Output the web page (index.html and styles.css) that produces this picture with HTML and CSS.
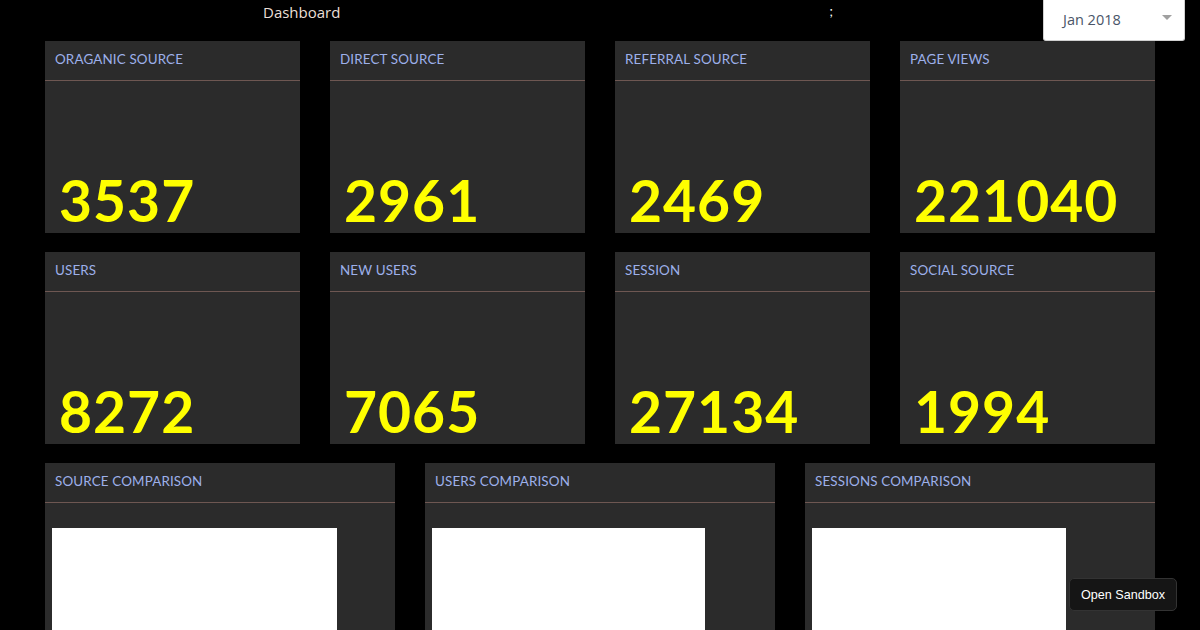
FILE: index.html
```html
<!DOCTYPE html>
<html>
<head>
<meta charset="utf-8">
<link rel="stylesheet" href="styles.css">
</head>
<body>
<div class="topbar">
  <div class="brand">Dashboard</div>
  <div class="semi">;</div>
  <div class="select">
    <span>Jan 2018</span>
    <span class="caret"></span>
  </div>
</div>
<div class="grid4">
  <div class="card"><div class="card-head">ORAGANIC SOURCE</div><div class="card-body"><div class="num">3537</div></div></div>
  <div class="card"><div class="card-head">DIRECT SOURCE</div><div class="card-body"><div class="num">2961</div></div></div>
  <div class="card"><div class="card-head">REFERRAL SOURCE</div><div class="card-body"><div class="num">2469</div></div></div>
  <div class="card"><div class="card-head">PAGE VIEWS</div><div class="card-body"><div class="num">221040</div></div></div>
</div>
<div class="grid4">
  <div class="card"><div class="card-head">USERS</div><div class="card-body"><div class="num">8272</div></div></div>
  <div class="card"><div class="card-head">NEW USERS</div><div class="card-body"><div class="num">7065</div></div></div>
  <div class="card"><div class="card-head">SESSION</div><div class="card-body"><div class="num">27134</div></div></div>
  <div class="card"><div class="card-head">SOCIAL SOURCE</div><div class="card-body"><div class="num">1994</div></div></div>
</div>
<div class="grid3">
  <div class="card big"><div class="card-head">SOURCE COMPARISON</div><div class="chart-wrap"><div class="chart w1"></div></div></div>
  <div class="card big"><div class="card-head">USERS COMPARISON</div><div class="chart-wrap"><div class="chart w2"></div></div></div>
  <div class="card big"><div class="card-head">SESSIONS COMPARISON</div><div class="chart-wrap"><div class="chart w3"></div></div></div>
</div>
<button class="sandbox">Open Sandbox</button>
</body>
</html>
```
FILE: styles.css
```css
html, body {
  margin: 0;
  padding: 0;
  background: #000;
  overflow: hidden;
  height: 630px;
}
body {
  font-family: "Lato", "Open Sans", sans-serif;
}
.topbar {
  height: 41px;
  display: flex;
  align-items: flex-start;
}
.brand {
  margin-left: 263px;
  margin-top: 2px;
  font-size: 15px;
  color: #eadfd6;
  font-family: "Open Sans", sans-serif;
}
.semi {
  margin-left: 489px;
  margin-top: 3px;
  color: #fff;
  font-size: 13px;
}
.select {
  margin-left: auto;
  margin-right: 15px;
  width: 142px;
  height: 41px;
  background: #fff;
  border: 1px solid #d0d0d0;
  border-top: none;
  border-radius: 0 0 3px 3px;
  box-sizing: border-box;
  display: flex;
  align-items: center;
  padding-left: 19px;
  padding-right: 12px;
  font-family: "Open Sans", sans-serif;
  font-size: 14.5px;
  color: #4a5568;
}
.select span:first-child { flex: 1; margin-top: -2px; }
.caret {
  width: 0;
  height: 0;
  border-left: 5px solid transparent;
  border-right: 5px solid transparent;
  border-top: 5px solid #a0a0a0;
  margin-top: -6px;
}
.grid4 {
  display: grid;
  grid-template-columns: repeat(4, 255px);
  column-gap: 30px;
  margin-left: 45px;
  margin-bottom: 19px;
}
.grid3 {
  display: grid;
  grid-template-columns: repeat(3, 350px);
  column-gap: 30px;
  margin-left: 45px;
}
.card {
  background: #2b2b2b;
  height: 192px;
  display: flex;
  flex-direction: column;
}
.card.big {
  height: 167px;
  overflow: hidden;
}
.card-head {
  height: 40px;
  flex: none;
  box-sizing: border-box;
  border-bottom: 1px solid #6e5752;
  padding: 10px 10px 0;
  font-size: 13.4px;
  color: #9db0ea;
  letter-spacing: 0.15px;
}
.card-body {
  flex: 1;
  display: flex;
  align-items: flex-end;
  padding: 0 0 4px 14px;
}
.num {
  font-size: 57px;
  font-weight: 700;
  color: #ffff00;
  line-height: 1;
  letter-spacing: 1px;
}
.chart-wrap {
  padding: 25px 7px 0;
}
.chart {
  background: #fff;
  height: 300px;
}
.w1 { width: 285px; }
.w2 { width: 273px; }
.w3 { width: 254px; }
.sandbox {
  position: fixed;
  right: 23px;
  bottom: 19px;
  height: 33px;
  padding: 0 11px;
  background: #151515;
  color: #fff;
  border: 1px solid #333;
  border-radius: 5px;
  font-family: "Liberation Sans", Arial, sans-serif;
  font-size: 12.6px;
}
```
